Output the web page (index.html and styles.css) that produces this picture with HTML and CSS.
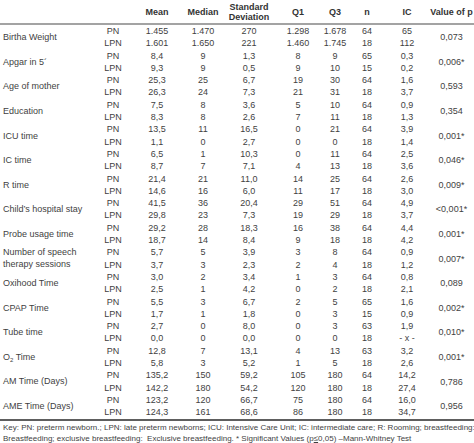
FILE: index.html
```html
<!DOCTYPE html>
<html>
<head>
<meta charset="utf-8">
<link rel="stylesheet" href="styles.css">
</head>
<body>
<table class="stats">
<colgroup>
<col class="c-label"><col class="c-grp"><col class="c-mean"><col class="c-med"><col class="c-sd"><col class="c-q1"><col class="c-q3"><col class="c-n"><col class="c-ic"><col class="c-p">
</colgroup>
<thead>
<tr class="head">
<th></th><th></th><th>Mean</th><th>Median</th><th>Standard<br>Deviation</th><th>Q1</th><th>Q3</th><th>n</th><th>IC</th><th>Value of p</th>
</tr>
</thead>
<tbody>
<tr><td class="label" rowspan="2">Birtha Weight</td><td>PN</td><td>1.455</td><td>1.470</td><td>270</td><td>1.298</td><td>1.678</td><td>64</td><td>65</td><td class="p" rowspan="2">0,073</td></tr>
<tr><td>LPN</td><td>1.601</td><td>1.650</td><td>221</td><td>1.460</td><td>1.745</td><td>18</td><td>112</td></tr>
<tr><td class="label" rowspan="2">Apgar in 5´</td><td>PN</td><td>8,4</td><td>9</td><td>1,3</td><td>8</td><td>9</td><td>65</td><td>0,3</td><td class="p" rowspan="2">0,006*</td></tr>
<tr><td>LPN</td><td>9,3</td><td>9</td><td>0,5</td><td>9</td><td>10</td><td>15</td><td>0,2</td></tr>
<tr><td class="label" rowspan="2">Age of mother</td><td>PN</td><td>25,3</td><td>25</td><td>6,7</td><td>19</td><td>30</td><td>64</td><td>1,6</td><td class="p" rowspan="2">0,593</td></tr>
<tr><td>LPN</td><td>26,3</td><td>24</td><td>7,3</td><td>21</td><td>31</td><td>18</td><td>3,7</td></tr>
<tr><td class="label" rowspan="2">Education</td><td>PN</td><td>7,5</td><td>8</td><td>3,6</td><td>5</td><td>10</td><td>64</td><td>0,9</td><td class="p" rowspan="2">0,354</td></tr>
<tr><td>LPN</td><td>8,3</td><td>8</td><td>2,6</td><td>7</td><td>11</td><td>18</td><td>1,3</td></tr>
<tr><td class="label" rowspan="2">ICU time</td><td>PN</td><td>13,5</td><td>11</td><td>16,5</td><td>0</td><td>21</td><td>64</td><td>3,9</td><td class="p" rowspan="2">0,001*</td></tr>
<tr><td>LPN</td><td>1,1</td><td>0</td><td>2,7</td><td>0</td><td>0</td><td>18</td><td>1,4</td></tr>
<tr><td class="label" rowspan="2">IC time</td><td>PN</td><td>6,5</td><td>1</td><td>10,3</td><td>0</td><td>11</td><td>64</td><td>2,5</td><td class="p" rowspan="2">0,046*</td></tr>
<tr><td>LPN</td><td>8,7</td><td>7</td><td>7,1</td><td>4</td><td>13</td><td>18</td><td>3,6</td></tr>
<tr><td class="label" rowspan="2">R time</td><td>PN</td><td>21,4</td><td>21</td><td>11,0</td><td>14</td><td>25</td><td>64</td><td>2,6</td><td class="p" rowspan="2">0,009*</td></tr>
<tr><td>LPN</td><td>14,6</td><td>16</td><td>6,0</td><td>11</td><td>17</td><td>18</td><td>3,0</td></tr>
<tr><td class="label" rowspan="2">Child’s hospital stay</td><td>PN</td><td>41,5</td><td>36</td><td>20,4</td><td>29</td><td>51</td><td>64</td><td>4,9</td><td class="p" rowspan="2">&lt;0,001*</td></tr>
<tr><td>LPN</td><td>29,8</td><td>23</td><td>7,3</td><td>19</td><td>29</td><td>18</td><td>3,7</td></tr>
<tr><td class="label" rowspan="2">Probe usage time</td><td>PN</td><td>29,2</td><td>28</td><td>18,3</td><td>16</td><td>38</td><td>64</td><td>4,4</td><td class="p" rowspan="2">0,001*</td></tr>
<tr><td>LPN</td><td>18,7</td><td>14</td><td>8,4</td><td>9</td><td>18</td><td>18</td><td>4,2</td></tr>
<tr><td class="label two" rowspan="2">Number of speech<br>therapy sessions</td><td>PN</td><td>5,7</td><td>5</td><td>3,9</td><td>3</td><td>8</td><td>64</td><td>0,9</td><td class="p" rowspan="2">0,007*</td></tr>
<tr><td>LPN</td><td>3,7</td><td>3</td><td>2,3</td><td>2</td><td>4</td><td>18</td><td>1,2</td></tr>
<tr><td class="label" rowspan="2">Oxihood Time</td><td>PN</td><td>3,0</td><td>2</td><td>3,4</td><td>1</td><td>3</td><td>64</td><td>0,8</td><td class="p" rowspan="2">0,089</td></tr>
<tr><td>LPN</td><td>2,5</td><td>1</td><td>4,2</td><td>0</td><td>2</td><td>18</td><td>2,1</td></tr>
<tr><td class="label" rowspan="2">CPAP Time</td><td>PN</td><td>5,5</td><td>3</td><td>6,7</td><td>2</td><td>5</td><td>65</td><td>1,6</td><td class="p" rowspan="2">0,002*</td></tr>
<tr><td>LPN</td><td>1,7</td><td>1</td><td>1,8</td><td>0</td><td>3</td><td>15</td><td>0,9</td></tr>
<tr><td class="label" rowspan="2">Tube time</td><td>PN</td><td>2,7</td><td>0</td><td>8,0</td><td>0</td><td>3</td><td>63</td><td>1,9</td><td class="p" rowspan="2">0,010*</td></tr>
<tr><td>LPN</td><td>0,0</td><td>0</td><td>0,0</td><td>0</td><td>0</td><td>18</td><td>- x -</td></tr>
<tr><td class="label" rowspan="2">O<sub>2</sub> Time</td><td>PN</td><td>12,8</td><td>7</td><td>13,1</td><td>4</td><td>13</td><td>63</td><td>3,2</td><td class="p" rowspan="2">0,001*</td></tr>
<tr><td>LPN</td><td>5,8</td><td>3</td><td>5,2</td><td>1</td><td>5</td><td>18</td><td>2,6</td></tr>
<tr><td class="label" rowspan="2">AM Time (Days)</td><td>PN</td><td>135,2</td><td>150</td><td>59,2</td><td>105</td><td>180</td><td>64</td><td>14,2</td><td class="p" rowspan="2">0,786</td></tr>
<tr><td>LPN</td><td>142,2</td><td>180</td><td>54,2</td><td>120</td><td>180</td><td>18</td><td>27,4</td></tr>
<tr class="last"><td class="label" rowspan="2">AME Time (Days)</td><td>PN</td><td>123,2</td><td>120</td><td>66,7</td><td>75</td><td>180</td><td>64</td><td>16,0</td><td class="p" rowspan="2">0,956</td></tr>
<tr class="last"><td>LPN</td><td>124,3</td><td>161</td><td>68,6</td><td>86</td><td>180</td><td>18</td><td>34,7</td></tr>
</tbody>
</table>
<p class="key">Key: PN: preterm newborn.; LPN: late preterm newborns; ICU: Intensive Care Unit; IC: intermediate care; R: Rooming; breastfeeding:<br>Breastfeeding; exclusive breastfeeding:&nbsp; Exclusive breastfeeding. * Significant Values (p<span class="le">≤</span>0,05) –Mann-Whitney Test</p>
</body>
</html>
```

FILE: styles.css
```css
html, body {
  margin: 0;
  padding: 0;
  background: #ffffff;
}

body {
  width: 474px;
  font-family: "Liberation Sans", Arial, sans-serif;
  color: #3f3f3f;
}

.stats {
  width: 474px;
  table-layout: fixed;
  border-collapse: collapse;
  border-spacing: 0;
  font-size: 9px;
}

.c-label { width: 95px; }
.c-grp { width: 36px; }
.c-mean { width: 52px; }
.c-med { width: 40px; }
.c-sd { width: 52px; }
.c-q1 { width: 46px; }
.c-q3 { width: 28px; }
.c-n { width: 36px; }
.c-ic { width: 44px; }
.c-p { width: 45px; }

.head th {
  height: 23px;
  padding: 0;
  font-weight: bold;
  font-size: 9px;
  line-height: 10px;
  color: #333333;
  text-align: center;
  vertical-align: middle;
  border-bottom: 2px solid #a3a3a3;
}

.stats td {
  height: 12.3px;
  padding: 0;
  line-height: 12.3px;
  text-align: center;
  vertical-align: middle;
  white-space: nowrap;
}

.stats td.label {
  text-align: left;
  padding-left: 3px;
  white-space: nowrap;
}

.stats td.label.two {
  line-height: 11.5px;
}

.stats td.p {
  line-height: 12px;
}

.stats sub {
  font-size: 6px;
  line-height: 0;
  vertical-align: -2px;
}

.stats tr.last + tr.last td,
.stats tr.last td.label,
.stats tr.last td.p {
  border-bottom: 2px solid #5e5e5e;
}

.key {
  margin: 0;
  padding: 1px 0 0 3px;
  font-size: 8px;
  line-height: 11px;
  color: #3f3f3f;
  white-space: nowrap;
}

.le {
  text-decoration: underline;
}
```
